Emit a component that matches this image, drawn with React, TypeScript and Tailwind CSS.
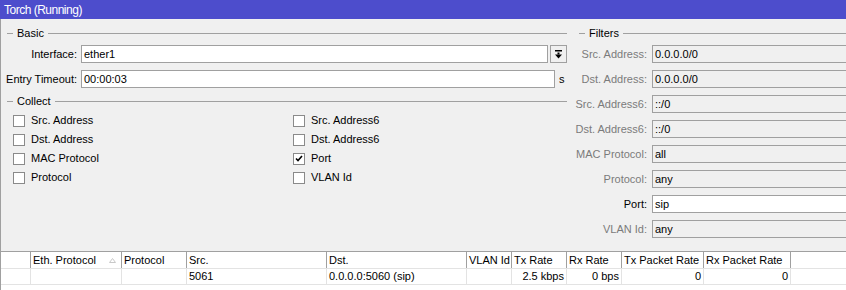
import React from "react";

const font = { fontFamily: '"Liberation Sans", Arial, sans-serif' };

function GroupHeader({ title, indent }: { title: string; indent: string }) {
  return (
    <div className="flex h-[14px] items-center">
      <div className={`${indent} h-px w-[6px] bg-[#a0a0a0]`} />
      <span className="px-[4px] text-[11px] leading-none text-black">{title}</span>
      <div className="h-px flex-1 bg-[#a0a0a0]" />
    </div>
  );
}

function Checkbox({ label, checked }: { label: string; checked?: boolean }) {
  return (
    <div className="flex h-[19px] items-center">
      <div className="flex h-[12px] w-[12px] items-center justify-center border border-[#8a8a8a] bg-white">
        {checked && (
          <svg width="8" height="7" viewBox="0 0 8 7">
            <path d="M1 3.5 L3 5.5 L7 1" fill="none" stroke="#000" strokeWidth="1.6" />
          </svg>
        )}
      </div>
      <span className="ml-[6px] whitespace-nowrap text-[11px] text-black">{label}</span>
    </div>
  );
}

function FilterRow({ label, value, active }: { label: string; value: string; active?: boolean }) {
  return (
    <div className="flex h-[18px] items-center">
      <span
        className={`w-[80px] shrink-0 whitespace-nowrap text-right text-[11px] ${
          active ? "text-black" : "text-[#7b7b7b]"
        }`}
      >
        {label}
      </span>
      <div
        className={`ml-[5px] flex h-[18px] w-[260px] shrink-0 items-center border border-[#a0a0a0] pl-[2px] text-[11px] text-black ${
          active ? "bg-white" : "bg-[#f0f0f0]"
        }`}
      >
        {value}
      </div>
    </div>
  );
}

const columns = [
  { name: "", w: "w-[30px]" },
  { name: "Eth. Protocol", w: "w-[91px]", sort: true },
  { name: "Protocol", w: "w-[65px]" },
  { name: "Src.", w: "w-[140px]" },
  { name: "Dst.", w: "w-[140px]" },
  { name: "VLAN Id", w: "w-[45px]" },
  { name: "Tx Rate", w: "w-[55px]" },
  { name: "Rx Rate", w: "w-[55px]" },
  { name: "Tx Packet Rate", w: "w-[82px]" },
  { name: "Rx Packet Rate", w: "w-[87px]" },
];

const row = [
  { v: "" },
  { v: "" },
  { v: "" },
  { v: "5061" },
  { v: "0.0.0.0:5060 (sip)" },
  { v: "" },
  { v: "2.5 kbps", right: true },
  { v: "0 bps", right: true },
  { v: "0", right: true },
  { v: "0", right: true },
];

export default function App() {
  return (
    <div className="h-[290px] w-[846px] overflow-hidden bg-[#f0f0f0]" style={font}>
      <div className="flex h-[19px] items-center bg-[#4d4dcc] pl-[4px] text-[12px] tracking-[-0.5px] text-white">
        Torch (Running)
      </div>

      <div className="flex h-[232px] border-l border-[#a0a0a0]">
        {/* left side */}
        <div className="w-[566px] shrink-0 pt-[7px]">
          <GroupHeader title="Basic" indent="ml-[6px]" />
          <div className="mt-[5px] flex h-[18px] items-center">
            <span className="w-[76px] text-right text-[11px] text-black">Interface:</span>
            <div className="ml-[4px] flex h-[18px] w-[467px] items-center border border-[#a0a0a0] bg-white pl-[2px] text-[11px] text-black">
              ether1
            </div>
            <div className="ml-[2px] flex h-[18px] w-[17px] items-center justify-center border border-[#a0a0a0] bg-[#f0f0f0]">
              <svg width="9" height="9" viewBox="0 0 9 9">
                <rect x="1" y="0" width="7" height="1.5" fill="#000" />
                <rect x="3.5" y="2.5" width="2" height="2" fill="#000" />
                <path d="M1 4.5 L8 4.5 L4.5 8.5 Z" fill="#000" />
              </svg>
            </div>
          </div>
          <div className="mt-[7px] flex h-[18px] items-center">
            <span className="w-[76px] whitespace-nowrap text-right text-[11px] text-black">Entry Timeout:</span>
            <div className="ml-[4px] flex h-[18px] w-[474px] items-center border border-[#a0a0a0] bg-white pl-[2px] text-[11px] text-black">
              00:00:03
            </div>
            <span className="ml-[4px] text-[11px] text-black">s</span>
          </div>
          <div className="mt-[6px]">
            <GroupHeader title="Collect" indent="ml-[6px]" />
          </div>
          <div className="mt-[3px] grid grid-cols-[280px_1fr] pl-[12px]">
            <div className="flex flex-col">
              <Checkbox label="Src. Address" />
              <Checkbox label="Dst. Address" />
              <Checkbox label="MAC Protocol" />
              <Checkbox label="Protocol" />
            </div>
            <div className="flex flex-col">
              <Checkbox label="Src. Address6" />
              <Checkbox label="Dst. Address6" />
              <Checkbox label="Port" checked />
              <Checkbox label="VLAN Id" />
            </div>
          </div>
        </div>

        {/* right side */}
        <div className="min-w-0 flex-1 overflow-hidden pt-[7px]">
          <GroupHeader title="Filters" indent="ml-[12px]" />
          <div className="mt-[5px] flex flex-col gap-[7px]">
            <FilterRow label="Src. Address:" value="0.0.0.0/0" />
            <FilterRow label="Dst. Address:" value="0.0.0.0/0" />
            <FilterRow label="Src. Address6:" value="::/0" />
            <FilterRow label="Dst. Address6:" value="::/0" />
            <FilterRow label="MAC Protocol:" value="all" />
            <FilterRow label="Protocol:" value="any" />
            <FilterRow label="Port:" value="sip" active />
            <FilterRow label="VLAN Id:" value="any" />
          </div>
        </div>
      </div>

      {/* table */}
      <div className="h-[39px] border-l border-t border-[#a0a0a0] bg-white">
        <div className="flex h-[17px] border-b border-[#e3e3e3]">
          {columns.map((c, i) => (
            <div
              key={i}
              className={`${c.w} relative flex shrink-0 items-center whitespace-nowrap border-r border-[#a0a0a0] pl-[2px] text-[11px] text-black`}
            >
              {c.name}
              {c.sort && (
                <svg className="absolute right-[5px] top-[6px]" width="7" height="5" viewBox="0 0 7 5">
                  <path d="M3.5 0.5 L6.5 4.5 L0.5 4.5 Z" fill="none" stroke="#c8c8c8" strokeWidth="1" />
                </svg>
              )}
            </div>
          ))}
        </div>
        <div className="flex h-[16px] border-b border-[#e3e3e3]">
          {row.map((c, i) => (
            <div
              key={i}
              className={`${columns[i].w} flex shrink-0 items-center whitespace-nowrap border-r border-[#e3e3e3] px-[2px] text-[11px] text-black ${
                c.right ? "justify-end" : ""
              }`}
            >
              {c.v}
            </div>
          ))}
        </div>
      </div>
    </div>
  );
}
